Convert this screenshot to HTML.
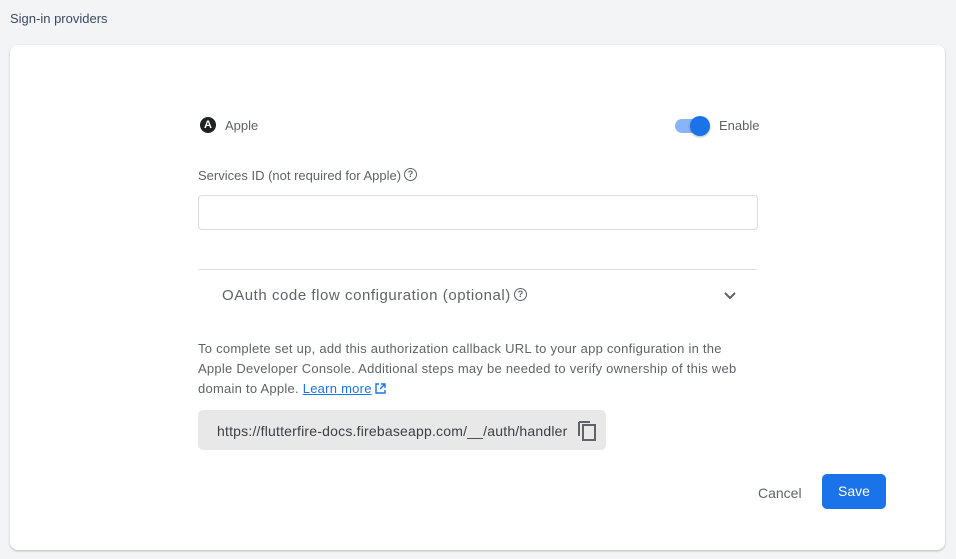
<!DOCTYPE html><html><head><style>
body{margin:0;width:956px;height:559px;background:#f3f4f6;font-family:"Liberation Sans",sans-serif;position:relative;overflow:hidden}
.a{position:absolute;white-space:nowrap}
.card{left:10px;top:45px;width:935px;height:505px;background:#fff;border-radius:8px;box-shadow:0 1px 2px rgba(0,0,0,.25)}
.t{color:#5f6368;font-size:13px}
</style></head><body>
<div class="a" style="left:10px;top:11px;font-size:13px;color:#3c4a64">Sign-in providers</div>
<div class="a card"></div>
<div class="a" style="left:200px;top:117px;width:16px;height:16px;border-radius:50%;background:#202124;color:#fff;font-size:11px;font-weight:bold;text-align:center;line-height:16px">A</div>
<div class="a t" style="left:225px;top:118px">Apple</div>
<div class="a" style="left:675px;top:119px;width:34px;height:14px;border-radius:7px;background:#8ab4f8"></div>
<div class="a" style="left:690px;top:116px;width:20px;height:20px;border-radius:50%;background:#1a73e8;box-shadow:0 1px 2px rgba(0,0,0,.3)"></div>
<div class="a t" style="left:719px;top:118px">Enable</div>
<div class="a t" style="left:198px;top:168px">Services ID (not required for Apple)</div>
<div class="a" style="left:404px;top:168px;width:11px;height:11px;border:1.3px solid #5f6368;border-radius:50%;font-size:9px;text-align:center;line-height:11px;color:#5f6368;font-weight:bold">?</div>
<div class="a" style="left:198px;top:195px;width:558px;height:33px;border:1px solid #dadce0;border-radius:4px"></div>
<div class="a" style="left:198px;top:269px;width:559px;height:1px;background:#e0e0e0"></div>
<div class="a" style="left:222px;top:287px;font-size:15px;color:#5f6368;letter-spacing:.55px">OAuth code flow configuration (optional)</div>
<div class="a" style="left:514px;top:288px;width:11px;height:11px;border:1.3px solid #5f6368;border-radius:50%;font-size:9px;text-align:center;line-height:11px;color:#5f6368;font-weight:bold">?</div>
<svg class="a" style="left:723px;top:291px" width="14" height="10"><path d="M2 2l5 5 5-5" stroke="#5f6368" stroke-width="2" fill="none"/></svg>
<div class="a t" style="left:198px;top:339px;line-height:20px;letter-spacing:.25px">To complete set up, add this authorization callback URL to your app configuration in the<br>Apple Developer Console. Additional steps may be needed to verify ownership of this web<br>domain to Apple. <span style="color:#1a73e8;text-decoration:underline">Learn more</span><svg width="13" height="13" style="vertical-align:-2px;margin-left:2px"><path d="M5 2H2v9h9V8M7 2h4v4M11 2L6 7" stroke="#1a73e8" stroke-width="1.4" fill="none"/></svg></div>
<div class="a" style="left:198px;top:410px;width:408px;height:40px;background:#e8e8e8;border-radius:5px"></div>
<div class="a" style="left:217px;top:423px;font-size:14px;color:#3c4043;letter-spacing:.2px">https://flutterfire-docs.firebaseapp.com/__/auth/handler</div>
<svg class="a" style="left:576px;top:419px" width="22" height="22"><path d="M3 3v14M3 3h11" stroke="#5f6368" stroke-width="2" fill="none"/><rect x="7" y="6" width="12" height="15" stroke="#5f6368" stroke-width="2" fill="none"/></svg>
<div class="a" style="left:758px;top:485px;font-size:14px;color:#5f6368">Cancel</div>
<div class="a" style="left:822px;top:474px;width:64px;height:35px;background:#1a73e8;border-radius:5px;color:#fff;font-size:14px;text-align:center;line-height:35px">Save</div>
</body></html>
